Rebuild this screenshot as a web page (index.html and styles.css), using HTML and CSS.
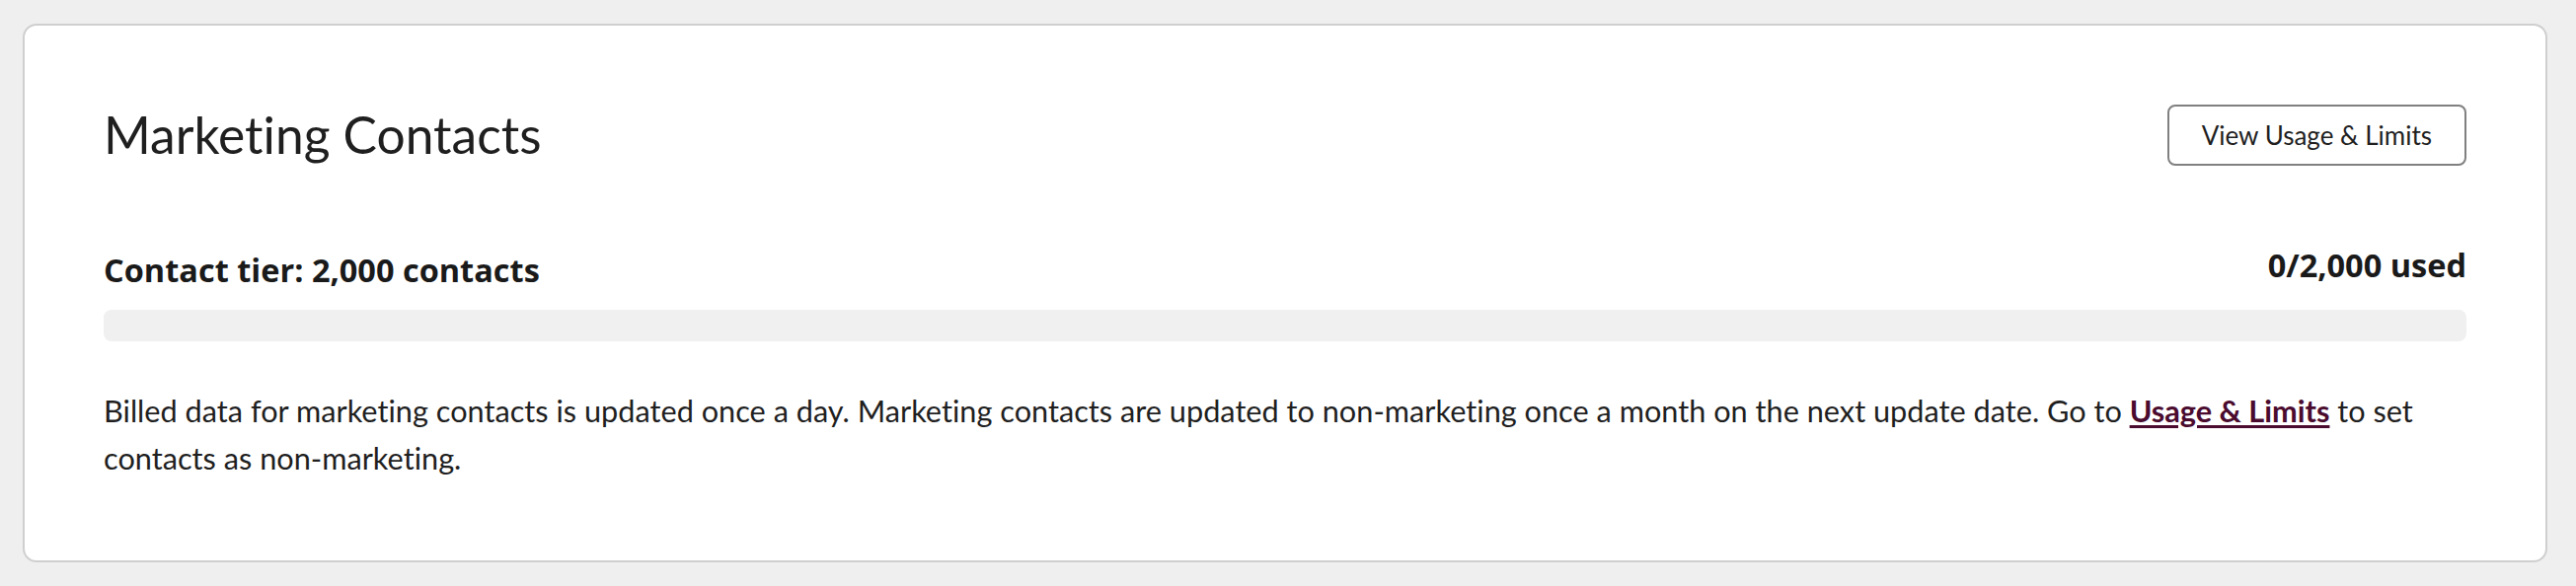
FILE: index.html
```html
<!DOCTYPE html>
<html>

<head>
    <title>Marketing Contacts</title>
    <link rel="stylesheet" href="styles.css">
</head>

<body>
    <div class="card">
        <div class="card-header">
            <h1 class="card-title">Marketing Contacts</h1>
            <button type="button" class="btn-secondary">View Usage &amp; Limits</button>
        </div>

        <div class="tier-row">
            <span class="tier-label">Contact tier: 2,000 contacts</span>
            <span class="tier-used">0/2,000 used</span>
        </div>
        <div class="progress">
            <div class="progress-fill" style="width: 0%"></div>
        </div>

        <p class="card-note">
            Billed data for marketing contacts is updated once a day. Marketing contacts are updated to non-marketing
            once a month on the next update date. Go to <a href="#" class="note-link">Usage &amp; Limits</a> to set
            contacts as non-marketing.
        </p>
    </div>
</body>

</html>
```

FILE: styles.css
```css
body {
    margin: 0;
    padding: 24px 29px 0 23px;
    background-color: #efefef;
    font-family: Lato, "Open Sans", sans-serif;
    font-variant-ligatures: no-common-ligatures;
    color: #1f1f1f;
}

.card {
    background-color: #fff;
    border: 2px solid #cfcfcf;
    border-radius: 14px;
    padding: 80px 80px 79px 80px;
}

.card-header {
    display: flex;
    justify-content: space-between;
    align-items: center;
}

.card-title {
    margin: 0;
    font-size: 51.5px;
    font-weight: 400;
    line-height: 1.15;
    color: #1f1f1f;
}

.btn-secondary {
    display: inline-flex;
    align-items: center;
    height: 62px;
    padding: 0 33px;
    background-color: #fff;
    border: 2px solid #808080;
    border-radius: 8px;
    font-family: Lato, sans-serif;
    font-size: 26px;
    font-variant-ligatures: no-common-ligatures;
    color: #1f1f1f;
    cursor: pointer;
}

.tier-row {
    display: flex;
    justify-content: space-between;
    align-items: flex-start;
    margin-top: 83px;
    font-family: "Open Sans", Lato, sans-serif;
    font-size: 32.5px;
    font-weight: 700;
    color: #1a1a1a;
}

/* sits a few px higher than the tier label */
.tier-used {
    line-height: 36px;
}

.progress {
    height: 32px;
    margin-top: 18px;
    background-color: #f0f0f0;
    border-radius: 8px;
    overflow: hidden;
}

.progress-fill {
    height: 100%;
    background-color: #4a0b2e;
}

.card-note {
    margin: 47px 0 0 0;
    font-size: 30.7px;
    line-height: 48px;
    color: #1f1f1f;
}

.note-link {
    color: #4a0b2e;
    font-weight: 700;
    text-decoration: underline;
    text-underline-offset: 3px;
}
```
